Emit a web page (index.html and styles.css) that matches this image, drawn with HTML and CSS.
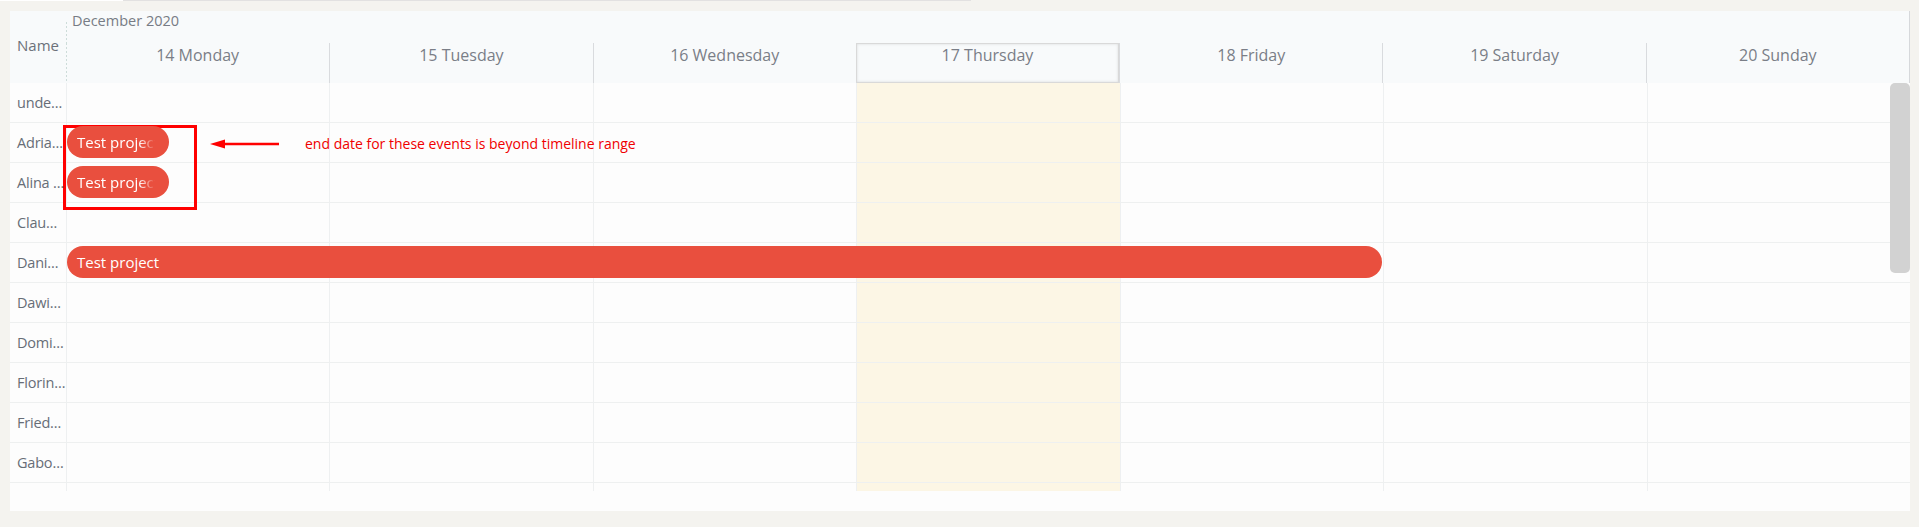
FILE: index.html
```html
<!DOCTYPE html>
<html>
<head>
<meta charset="utf-8">
<link rel="stylesheet" href="styles.css">
</head>
<body>
<div class="topline"><span class="tl-a"></span><span class="tl-b"></span><span class="tl-c"></span></div>
<div class="panel">
  <div class="header">
    <div class="h-name">Name</div>
    <div class="h-month">December 2020</div>
    <div class="h-day first">14 Monday</div>
    <div class="h-day">15 Tuesday</div>
    <div class="h-day">16 Wednesday</div>
    <div class="h-day today">17 Thursday</div>
    <div class="h-day">18 Friday</div>
    <div class="h-day">19 Saturday</div>
    <div class="h-day">20 Sunday</div>
  </div>
  <div class="rows">
    <div class="row"><div class="name">unde…</div><div class="c"></div><div class="c"></div><div class="c"></div><div class="c t"></div><div class="c"></div><div class="c"></div><div class="c"></div></div>
    <div class="row"><div class="name">Adria…</div><div class="c"></div><div class="c"></div><div class="c"></div><div class="c t"></div><div class="c"></div><div class="c"></div><div class="c"></div><div class="ev short"><span class="fade">Test project</span></div></div>
    <div class="row"><div class="name">Alina …</div><div class="c"></div><div class="c"></div><div class="c"></div><div class="c t"></div><div class="c"></div><div class="c"></div><div class="c"></div><div class="ev short"><span class="fade">Test project</span></div></div>
    <div class="row"><div class="name">Clau…</div><div class="c"></div><div class="c"></div><div class="c"></div><div class="c t"></div><div class="c"></div><div class="c"></div><div class="c"></div></div>
    <div class="row"><div class="name">Dani…</div><div class="c"></div><div class="c"></div><div class="c"></div><div class="c t"></div><div class="c"></div><div class="c"></div><div class="c"></div><div class="ev long"><span>Test project</span></div></div>
    <div class="row"><div class="name">Dawi…</div><div class="c"></div><div class="c"></div><div class="c"></div><div class="c t"></div><div class="c"></div><div class="c"></div><div class="c"></div></div>
    <div class="row"><div class="name">Domi…</div><div class="c"></div><div class="c"></div><div class="c"></div><div class="c t"></div><div class="c"></div><div class="c"></div><div class="c"></div></div>
    <div class="row"><div class="name">Florin…</div><div class="c"></div><div class="c"></div><div class="c"></div><div class="c t"></div><div class="c"></div><div class="c"></div><div class="c"></div></div>
    <div class="row"><div class="name">Fried…</div><div class="c"></div><div class="c"></div><div class="c"></div><div class="c t"></div><div class="c"></div><div class="c"></div><div class="c"></div></div>
    <div class="row"><div class="name">Gabo…</div><div class="c"></div><div class="c"></div><div class="c"></div><div class="c t"></div><div class="c"></div><div class="c"></div><div class="c"></div></div>
    <div class="row"><div class="name"></div><div class="c"></div><div class="c"></div><div class="c"></div><div class="c t"></div><div class="c"></div><div class="c"></div><div class="c"></div></div>
  </div>
  <div class="footer"></div>

  <div class="scroll-thumb"></div>
  <div class="note-box"></div>
  <svg class="note-arrow" width="72" height="12" viewBox="0 0 72 12">
    <line x1="12" y1="6" x2="69" y2="6" stroke="#ff0000" stroke-width="2.5"/>
    <polygon points="0,6 15,1.5 15,10.5" fill="#ff0000"/>
  </svg>
  <div class="note-text">end date for these events is beyond timeline range</div>
</div>
</body>
</html>
```

FILE: styles.css
```css
* { box-sizing: border-box; }
html, body { margin: 0; padding: 0; }
body {
  background: #f4f3ef;
  font-family: "Open Sans", "Noto Sans", sans-serif;
  width: 1919px;
  height: 527px;
  overflow: hidden;
}
.topline { display: flex; height: 1px; }
.tl-a { width: 123px; background: #ffffff; }
.tl-b { width: 848px; background: #e2e1e1; }
.tl-c { flex: 1; }

.panel {
  position: relative;
  margin: 10px 0 0 10px;
  width: 1900px;
  height: 500px;
  background: #fdfdfd;
}

.header {
  display: grid;
  grid-template-columns: 56px repeat(7, 1fr);
  grid-template-rows: 32px 40px;
  background: #f8fafb;
  border-right: 1px solid #d6d8db;
}
.h-name {
  grid-row: 1 / 3;
  grid-column: 1;
  display: flex;
  align-items: center;
  padding: 0 0 4px 7px;
  font-size: 15px;
  color: #6c717a;
}
.h-month {
  grid-row: 1;
  grid-column: 2 / 9;
  padding: 2px 0 0 6px;
  font-size: 14.5px;
  line-height: 15px;
  color: #777c85;
  background: repeating-linear-gradient(to bottom, #cddcd9 0 2px, transparent 2px 4px) left 11px / 1px 100% no-repeat;
}
.h-day {
  grid-row: 2;
  text-align: center;
  font-size: 16px;
  line-height: 22px;
  padding-top: 1px;
  color: #7a7e87;
  border-left: 1px solid #d9dbde;
}
.h-day.first {
  border-left: none;
  background: repeating-linear-gradient(to bottom, #cddcd9 0 2px, transparent 2px 4px) left top / 1px 100% no-repeat;
}
.h-day.today {
  border: 1px solid #d9d9d9;
  box-shadow: inset 0 0 3px rgba(0, 0, 0, 0.12);
  padding-top: 0;
}

.rows {
  height: 408px;
  overflow: hidden;
  background: #fdfdfd;
}
.row {
  display: grid;
  grid-template-columns: 56px repeat(7, 1fr);
  height: 40px;
  border-bottom: 1px solid #eef0f0;
}
.row > :nth-child(1) { grid-column: 1; }
.row > :nth-child(2) { grid-column: 2; }
.row > :nth-child(3) { grid-column: 3; }
.row > :nth-child(4) { grid-column: 4; }
.row > :nth-child(5) { grid-column: 5; }
.row > :nth-child(6) { grid-column: 6; }
.row > :nth-child(7) { grid-column: 7; }
.row > :nth-child(8) { grid-column: 8; }
.name {
  grid-row: 1;
  padding-left: 7px;
  font-size: 14.5px;
  letter-spacing: -0.2px;
  line-height: 39px;
  color: #676d77;
  white-space: nowrap;
  overflow: visible;
  z-index: 1;
}
.c {
  grid-row: 1;
  border-left: 1px solid #eef0f1;
}
.c.t { background: #fcf6e5; }

.row > .ev {
  grid-row: 1;
  grid-column: 2 / 3;
  align-self: center;
  height: 32px;
  margin-left: 1px;
  margin-top: -1px;
  border-radius: 16px;
  background: #e94f3e;
  color: #ffffff;
  font-size: 15px;
  line-height: 32px;
  padding-left: 10px;
  white-space: nowrap;
  overflow: hidden;
  z-index: 1;
}
.row > .ev.short {
  justify-self: start;
  width: 102px;
}
.row > .ev.long {
  grid-column: 2 / 7;
  margin-right: 1px;
}
.fade {
  display: block;
  width: 78px;
  overflow: hidden;
  -webkit-mask-image: linear-gradient(to right, #000 0, #000 62px, transparent 78px);
  mask-image: linear-gradient(to right, #000 0, #000 62px, transparent 78px);
}

.footer { height: 20px; background: #fdfdfd; }

.scroll-thumb {
  position: absolute;
  left: 1880px;
  top: 72px;
  width: 20px;
  height: 190px;
  background: #d2d2d2;
  border-radius: 5px;
}
.note-box {
  position: absolute;
  left: 53px;
  top: 114px;
  width: 134px;
  height: 85px;
  border: 3px solid #ff0000;
}
.note-arrow {
  position: absolute;
  left: 200px;
  top: 127px;
}
.note-text {
  position: absolute;
  left: 295px;
  top: 123px;
  font-family: "Open Sans", "Noto Sans", sans-serif;
  font-size: 14px;
  line-height: 20px;
  color: #f00000;
  white-space: nowrap;
}
```
